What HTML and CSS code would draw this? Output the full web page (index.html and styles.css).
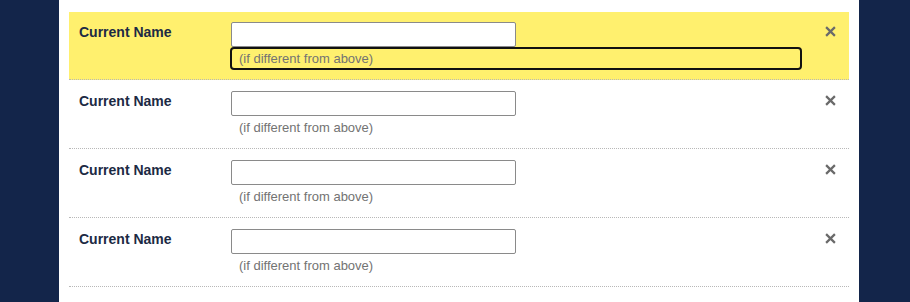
FILE: index.html
```html
<!DOCTYPE html>
<html lang="en">
<head>
<meta charset="utf-8">
<title>Current Name</title>
<link rel="stylesheet" href="styles.css">
</head>
<body>
<div class="panel">
  <div class="row row--active">
    <label class="label">Current Name</label>
    <div class="field">
      <input class="input" type="text">
      <div class="help help--focus">(if different from above)</div>
    </div>
    <button class="remove" aria-label="Remove"><svg viewBox="0 0 10 10" width="11" height="11"><path d="M1 1L9 9M9 1L1 9" stroke="#6a6a6a" stroke-width="2" fill="none"/></svg></button>
  </div>
  <div class="row">
    <label class="label">Current Name</label>
    <div class="field">
      <input class="input" type="text">
      <div class="help">(if different from above)</div>
    </div>
    <button class="remove" aria-label="Remove"><svg viewBox="0 0 10 10" width="11" height="11"><path d="M1 1L9 9M9 1L1 9" stroke="#6a6a6a" stroke-width="2" fill="none"/></svg></button>
  </div>
  <div class="row">
    <label class="label">Current Name</label>
    <div class="field">
      <input class="input" type="text">
      <div class="help">(if different from above)</div>
    </div>
    <button class="remove" aria-label="Remove"><svg viewBox="0 0 10 10" width="11" height="11"><path d="M1 1L9 9M9 1L1 9" stroke="#6a6a6a" stroke-width="2" fill="none"/></svg></button>
  </div>
  <div class="row">
    <label class="label">Current Name</label>
    <div class="field">
      <input class="input" type="text">
      <div class="help">(if different from above)</div>
    </div>
    <button class="remove" aria-label="Remove"><svg viewBox="0 0 10 10" width="11" height="11"><path d="M1 1L9 9M9 1L1 9" stroke="#6a6a6a" stroke-width="2" fill="none"/></svg></button>
  </div>
</div>
</body>
</html>
```

FILE: styles.css
```css
* { box-sizing: border-box; }
html, body { margin: 0; height: 100%; }
body {
  background: #13254a;
  font-family: "Liberation Sans", Arial, sans-serif;
}
.panel {
  margin-left: 59px;
  width: 800px;
  min-height: 100%;
  background: #ffffff;
  padding: 12px 10px 0 10px;
}
.row {
  display: grid;
  grid-template-columns: 151px 572px 1fr;
  align-items: start;
  height: 69px;
  padding: 11px 0 0 10px;
  border-bottom: 1px dotted #b8b8b8;
}
.row--active {
  background: #fff06e;
  height: 68px;
  padding-top: 10px;
}
.label {
  font-size: 14px;
  font-weight: bold;
  line-height: 16px;
  color: #1c2a44;
  padding-top: 2px;
}
.field {
  display: flex;
  flex-direction: column;
  align-items: flex-start;
}
.input {
  margin: 0 0 0 1px;
  width: 285px;
  height: 25px;
  border: 1px solid #8a8a8a;
  border-radius: 2px;
  background: #fff;
  padding: 2px 4px;
  font: 13px "Liberation Sans", Arial, sans-serif;
}
.help {
  width: 572px;
  height: 23px;
  border: 2px solid transparent;
  border-radius: 4px;
  padding: 1px 7px 0 7px;
  font-size: 13px;
  line-height: 18px;
  color: #737373;
}
.help--focus {
  border-color: #111111;
}
.remove {
  justify-self: start;
  margin: 4px 0 0 23px;
  padding: 0;
  border: 0;
  background: transparent;
  width: 11px;
  height: 11px;
  line-height: 0;
  cursor: pointer;
}
.remove svg { display: block; }
```
